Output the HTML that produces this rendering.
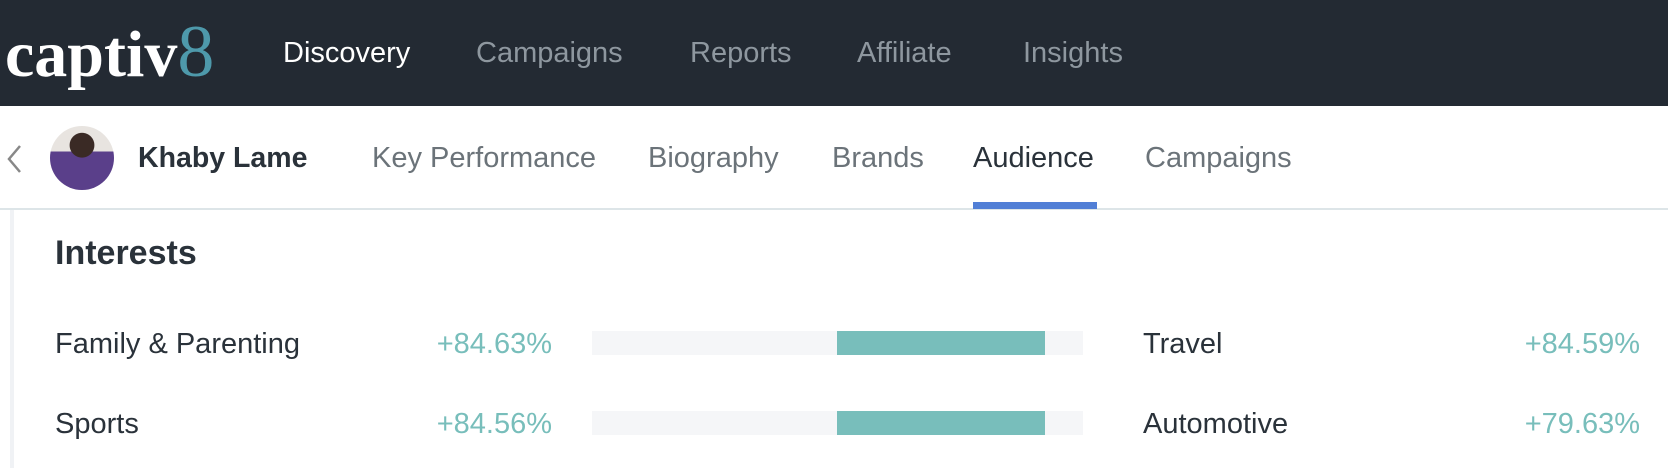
<!DOCTYPE html>
<html><head><style>
*{margin:0;padding:0;box-sizing:border-box}
body{width:1668px;height:468px;overflow:hidden;background:#fff;font-family:"Liberation Sans",sans-serif;position:relative}
.top{position:absolute;left:0;top:0;width:1668px;height:106px;background:#232a33}
.logo{position:absolute;left:5px;top:10px;font-family:"Liberation Serif",serif;font-weight:bold;font-size:66px;color:#fff;letter-spacing:0}
.logo span{color:#4e99ab;font-weight:normal;font-size:74px}
.nav{position:absolute;top:37px;font-size:29px;color:#8e979f}
.t{position:absolute;top:142px;font-size:29px;color:#6b7379}
.ab{position:absolute;font-size:29px;color:#2a323a}
.pc{position:absolute;font-size:29px;color:#78bebb;text-align:right}
.bar{position:absolute;left:592px;width:491px;height:24px;background:#f5f6f8}
.bar i{position:absolute;left:245px;width:208px;height:24px;background:#78bebb}
</style></head><body>
<div class="top">
<div class="logo">captiv<span>8</span></div>
<div class="nav" style="left:283px;color:#fff">Discovery</div>
<div class="nav" style="left:476px">Campaigns</div>
<div class="nav" style="left:690px">Reports</div>
<div class="nav" style="left:857px">Affiliate</div>
<div class="nav" style="left:1023px">Insights</div>
</div>
<svg style="position:absolute;left:4px;top:144px" width="20" height="30"><path d="M16 2 L5 15 L16 28" stroke="#888" stroke-width="2.5" fill="none"/></svg>
<div style="position:absolute;left:50px;top:126px;width:64px;height:64px;border-radius:50%;background:radial-gradient(circle at 50% 30%,#3a2a25 0 22%,transparent 23%),linear-gradient(#e8e4e0 0 40%,#5a3f8a 40%);overflow:hidden"></div>
<div style="position:absolute;left:138px;top:142px;font-size:28.5px;font-weight:bold;color:#2a323a">Khaby Lame</div>
<div class="t" style="left:372px">Key Performance</div>
<div class="t" style="left:648px">Biography</div>
<div class="t" style="left:832px">Brands</div>
<div class="t" style="left:973px;color:#2a323a">Audience</div>
<div class="t" style="left:1145px">Campaigns</div>
<div style="position:absolute;left:0;top:208px;width:1668px;height:2px;background:#dde5e8"></div>
<div style="position:absolute;left:973px;top:202px;width:124px;height:7px;background:#517fd6"></div>
<div style="position:absolute;left:10px;top:210px;width:4px;height:258px;background:#f0f2f5"></div>
<div style="position:absolute;left:55px;top:234px;font-size:34px;font-weight:bold;color:#2a323a">Interests</div>
<div class="ab" style="left:55px;top:328px">Family &amp; Parenting</div>
<div class="pc" style="left:352px;width:200px;top:328px">+84.63%</div>
<div class="bar" style="top:331px"><i></i></div>
<div class="ab" style="left:1143px;top:328px">Travel</div>
<div class="pc" style="left:1440px;width:200px;top:328px">+84.59%</div>
<div class="ab" style="left:55px;top:408px">Sports</div>
<div class="pc" style="left:352px;width:200px;top:408px">+84.56%</div>
<div class="bar" style="top:411px"><i></i></div>
<div class="ab" style="left:1143px;top:408px">Automotive</div>
<div class="pc" style="left:1440px;width:200px;top:408px">+79.63%</div>
</body></html>
